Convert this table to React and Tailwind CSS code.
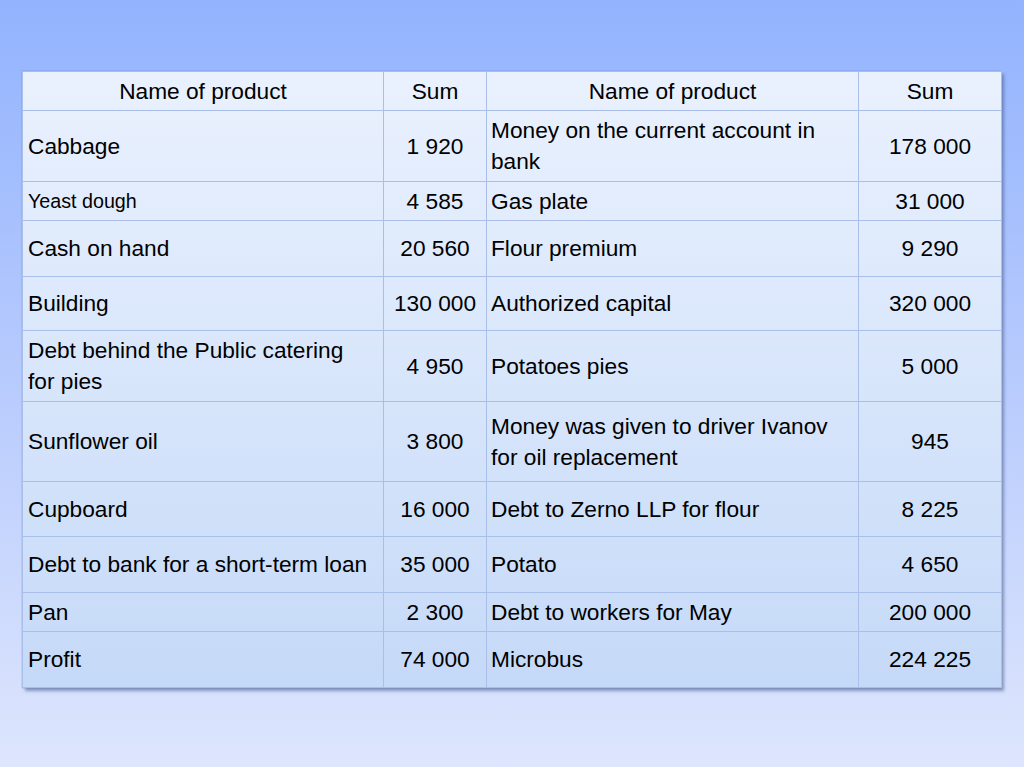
import React from "react";

const rows = [
  { h: "h-[71px]", a: "Cabbage", b: "1 920", c: "Money on the current account in bank", d: "178 000" },
  { h: "h-[39px]", a: "Yeast dough", b: "4 585", c: "Gas plate", d: "31 000", small: true },
  { h: "h-[56px]", a: "Cash on hand", b: "20 560", c: "Flour premium", d: "9 290" },
  { h: "h-[54px]", a: "Building", b: "130 000", c: "Authorized capital", d: "320 000" },
  { h: "h-[71px]", a: "Debt behind the Public catering for pies", b: "4 950", c: "Potatoes pies", d: "5 000" },
  { h: "h-[80px]", a: "Sunflower oil", b: "3 800", c: "Money was given to driver Ivanov for oil replacement", d: "945" },
  { h: "h-[55px]", a: "Cupboard", b: "16 000", c: "Debt to Zerno LLP for flour", d: "8 225" },
  { h: "h-[56px]", a: "Debt to bank for a short-term loan", b: "35 000", c: "Potato", d: "4 650" },
  { h: "h-[39px]", a: "Pan", b: "2 300", c: "Debt to workers for May", d: "200 000" },
  { h: "h-[56px]", a: "Profit", b: "74 000", c: "Microbus", d: "224 225" },
];

const cell = "border border-[#a9bfe9] align-middle leading-[31px]";

const App = () => {
  return (
    <div className="w-[1024px] h-[767px] bg-gradient-to-b from-[#92b3fe] via-[#b8cbfd] to-[#dee6fd] pt-[71px] pl-[22px] font-['Liberation_Sans',Arial,sans-serif] text-[22.7px] text-black overflow-hidden">
      <div className="w-[979px] bg-gradient-to-b from-[#eaf1fe] via-[#d8e6fb] to-[#c5d9f8] shadow-[0_0_1px_rgba(60,80,130,0.6),3px_3px_3px_rgba(70,90,140,0.55)]">
        <table className="w-full border-collapse table-fixed">
          <colgroup>
            <col className="w-[361px]" />
            <col className="w-[103px]" />
            <col className="w-[372px]" />
            <col className="w-[143px]" />
          </colgroup>
          <thead>
            <tr className="h-[39px]">
              <th className={`${cell} font-normal text-center`}>Name of product</th>
              <th className={`${cell} font-normal text-center`}>Sum</th>
              <th className={`${cell} font-normal text-center`}>Name of product</th>
              <th className={`${cell} font-normal text-center`}>Sum</th>
            </tr>
          </thead>
          <tbody>
            {rows.map((r) => (
              <tr key={r.a} className={r.h}>
                <td className={`${cell} pl-[5px] pr-[11px] ${r.small ? "text-[19.7px]" : ""}`}>{r.a}</td>
                <td className={`${cell} text-center`}>{r.b}</td>
                <td className={`${cell} pl-[4px] pr-[10px]`}>{r.c}</td>
                <td className={`${cell} text-center`}>{r.d}</td>
              </tr>
            ))}
          </tbody>
        </table>
      </div>
    </div>
  );
};

export default App;
